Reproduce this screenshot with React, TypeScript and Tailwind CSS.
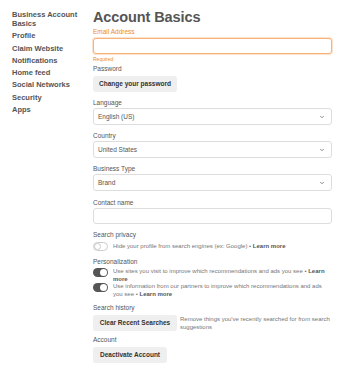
import { ChevronDown } from "lucide-react";

const nav = [
  "Business Account Basics",
  "Profile",
  "Claim Website",
  "Notifications",
  "Home feed",
  "Social Networks",
  "Security",
  "Apps",
];

function Label({ children, className = "" }: { children: React.ReactNode; className?: string }) {
  return <p className={`text-[6.5px] leading-[8px] text-[#555] ${className}`}>{children}</p>;
}

function Select({ value }: { value: string }) {
  return (
    <div className="mt-[1px] flex h-[17px] items-center justify-between rounded-[3px] border border-[#ddd] bg-white pl-[4px] pr-[6px]">
      <span className="text-[6.5px] text-[#555]">{value}</span>
      <ChevronDown className="size-[6px] text-[#666]" strokeWidth={3} />
    </div>
  );
}

function Toggle({ on }: { on: boolean }) {
  return on ? (
    <div className="flex h-[9px] w-[15px] shrink-0 items-center justify-end rounded-full bg-[#555] pr-[1px]">
      <div className="size-[7px] rounded-full bg-white" />
    </div>
  ) : (
    <div className="flex h-[9px] w-[15px] shrink-0 items-center rounded-full border border-[#ccc] bg-white">
      <div className="size-[7px] rounded-full border border-[#ccc] bg-white" />
    </div>
  );
}

function GrayButton({ children, className = "" }: { children: React.ReactNode; className?: string }) {
  return (
    <button
      type="button"
      className={`flex h-[16px] shrink-0 items-center justify-center rounded-[3px] bg-[#efefef] text-[6.5px] font-bold text-[#333] ${className}`}
    >
      {children}
    </button>
  );
}

export default function App() {
  return (
    <div className="flex h-[375px] w-[350px] bg-white pl-[12px] pt-[9px] font-['Liberation_Sans',Arial,sans-serif]">
      <nav className="flex w-[81px] shrink-0 flex-col gap-[3.3px] pt-[1px]">
        {nav.map((item) => (
          <a key={item} className="w-[70px] text-[7.5px] font-bold leading-[9px] text-[#555]">
            {item}
          </a>
        ))}
      </nav>

      <main className="flex w-[239px] flex-col">
        <h1 className="text-[14.5px] font-bold leading-[16px] tracking-[-0.1px] text-[#555]">Account Basics</h1>

        <Label className="mt-[3px] text-[#f08a24]">Email Address</Label>
        <div className="mt-[2px] h-[16px] rounded-[3px] border border-[#f6b27a] bg-white shadow-[0_0_0_1px_#fde3cc]" />
        <p className="mt-[2px] text-[5px] leading-[6px] text-[#f08a24]">Required</p>

        <Label className="mt-[3px]">Password</Label>
        <GrayButton className="mt-[3px] w-[84px]">Change your password</GrayButton>

        <Label className="mt-[7px]">Language</Label>
        <Select value="English (US)" />

        <Label className="mt-[7px]">Country</Label>
        <Select value="United States" />

        <Label className="mt-[7px]">Business Type</Label>
        <Select value="Brand" />

        <Label className="mt-[8px]">Contact name</Label>
        <div className="mt-[1px] h-[16px] rounded-[3px] border border-[#ddd] bg-white" />

        <Label className="mt-[7px]">Search privacy</Label>
        <div className="mt-[3px] flex items-center gap-[5px]">
          <Toggle on={false} />
          <p className="text-[6px] leading-[7.5px] text-[#767676]">
            Hide your profile from search engines (ex: Google) • <b className="text-[#555]">Learn more</b>
          </p>
        </div>

        <Label className="mt-[7px]">Personalization</Label>
        <div className="mt-[2px] flex items-start gap-[5px]">
          <Toggle on />
          <p className="w-[214px] text-[6px] leading-[7.5px] text-[#767676]">
            Use sites you visit to improve which recommendations and ads you see •{" "}
            <b className="text-[#555]">Learn more</b>
          </p>
        </div>
        <div className="flex items-start gap-[5px]">
          <Toggle on />
          <p className="w-[214px] text-[6px] leading-[7.5px] text-[#767676]">
            Use information from our partners to improve which recommendations and ads you see •{" "}
            <b className="text-[#555]">Learn more</b>
          </p>
        </div>

        <Label className="mt-[6px]">Search history</Label>
        <div className="mt-[3px] flex items-start gap-[3px]">
          <GrayButton className="w-[84px]">Clear Recent Searches</GrayButton>
          <p className="mt-[1px] w-[152px] text-[6px] leading-[7.5px] text-[#767676]">
            Remove things you've recently searched for from search suggestions
          </p>
        </div>

        <Label className="mt-[5px]">Account</Label>
        <GrayButton className="mt-[3px] w-[74px]">Deactivate Account</GrayButton>
      </main>
    </div>
  );
}
